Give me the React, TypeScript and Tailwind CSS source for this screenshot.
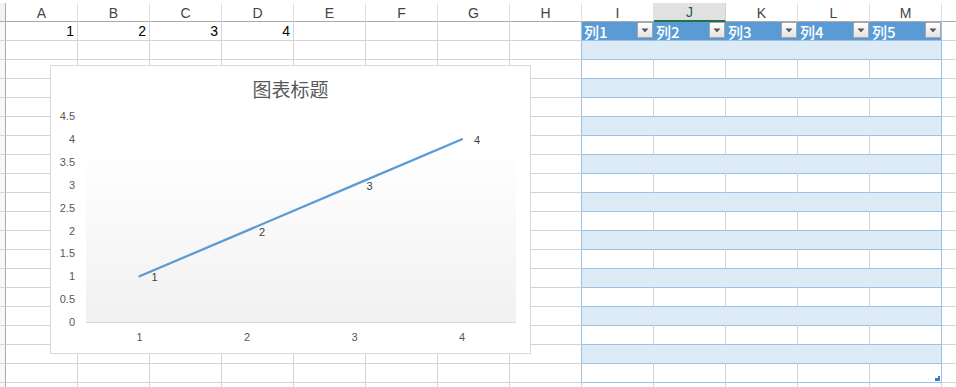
import React from "react";

const COLS = ["A", "B", "C", "D", "E", "F", "G", "H", "I", "J", "K", "L", "M"];
const ROWS = Array.from({ length: 20 }, (_, i) => i + 1);
const VALUES: Record<string, number> = { A: 1, B: 2, C: 3, D: 4 };
const TABLE_COLS = ["I", "J", "K", "L", "M"];

const font = "font-['Liberation_Sans','Noto_Sans_CJK_SC',sans-serif]";

function cellClass(col: string, row: number) {
  const inTable = TABLE_COLS.includes(col) && row <= 19;
  if (!inTable) {
    if (col === "H" && row <= 19) return "border-r border-b border-[#d4d4d4] border-r-[#9bc2e6]";
    return "border-r border-b border-[#d4d4d4]";
  }
  if (row === 1) {
    return col === "M"
      ? "border-r border-b bg-[#5b9bd5] border-[#5b9bd5] border-r-[#9bc2e6] border-b-[#9bc2e6]"
      : "border-r border-b bg-[#5b9bd5] border-[#5b9bd5] border-b-[#9bc2e6]";
  }
  if (row % 2 === 0) {
    return col === "M"
      ? "border-r border-b bg-[#ddebf7] border-[#ddebf7] border-r-[#9bc2e6] border-b-[#9bc2e6]"
      : "border-r border-b bg-[#ddebf7] border-[#ddebf7] border-b-[#9bc2e6]";
  }
  return col === "M"
    ? "border-r border-b border-[#9bc2e6]"
    : "border-r border-b border-[#d4d4d4] border-b-[#9bc2e6]";
}

function FilterButton() {
  return (
    <div className="flex h-[16px] w-[16px] items-center justify-center border border-[#a6a6a6] bg-gradient-to-b from-white to-[#e4e4e4]">
      <svg width="8" height="5" viewBox="0 0 8 5">
        <path d="M0.5 0.5 L7.5 0.5 L4 4.5 Z" fill="#595959" />
      </svg>
    </div>
  );
}

function ColumnHeader() {
  return (
    <div className="flex h-[22px] pt-[3px]">
      <div className="w-[6px] shrink-0 border-r border-b border-[#ababab] bg-[#f3f3f3]" />
      {COLS.map((c) =>
        c === "J" ? (
          <div
            key={c}
            className="flex w-[72px] shrink-0 items-center justify-center border-r border-b-2 border-[#d0d0d0] border-b-[#217346] bg-[#e1e1e1] pt-[2px] text-[14px] text-[#1e5f3b]"
          >
            {c}
          </div>
        ) : (
          <div
            key={c}
            className="flex w-[72px] shrink-0 items-center justify-center border-r border-b border-[#e1e1e1] border-b-[#ababab] pt-[3px] text-[14px] text-[#444]"
          >
            {c}
          </div>
        )
      )}
      <div className="flex-1 border-b border-[#ababab]" />
    </div>
  );
}

function Row({ row }: { row: number }) {
  return (
    <div className="flex h-[19px]">
      <div className="w-[6px] shrink-0 border-r border-b border-[#d4d4d4] border-r-[#ababab] bg-[#f8f8f8]" />
      {COLS.map((c) => {
        const idx = TABLE_COLS.indexOf(c);
        return (
          <div key={c} className={`relative flex w-[72px] shrink-0 items-center ${cellClass(c, row)}`}>
            {row === 1 && VALUES[c] !== undefined && (
              <span className="ml-auto pr-[3px] text-[14px] text-black">{VALUES[c]}</span>
            )}
            {row === 1 && idx >= 0 && (
              <div className="flex h-full w-full items-start justify-between">
                <span className="pl-[2px] font-['Noto_Sans_CJK_SC',sans-serif] text-[15px] font-medium leading-[19px] text-white">
                  列{idx + 1}
                </span>
                <FilterButton />
              </div>
            )}
            {row === 19 && c === "M" && (
              <div className="absolute right-[1px] bottom-[1px] h-[5px] w-[5px] bg-[#4472c4] [clip-path:polygon(100%_0,100%_100%,0_100%,0_40%,60%_40%,60%_0)]" />
            )}
          </div>
        );
      })}
      <div className="flex-1 border-b border-[#d4d4d4]" />
    </div>
  );
}

function Chart() {
  const yTicks = [0, 0.5, 1, 1.5, 2, 2.5, 3, 3.5, 4, 4.5];
  const xs = [88.5, 196, 303.5, 411];
  const y = (v: number) => 256 - 45.7 * v;
  const pts = [1, 2, 3, 4].map((v, i) => [xs[i], y(v)] as const);
  return (
    <div className="absolute left-[50px] top-[65px] h-[289px] w-[481px] border border-[#d9d9d9] bg-white">
      <svg className="absolute inset-0" width="479" height="287" viewBox="0 0 479 287">
        <defs>
          <linearGradient id="plotBg" x1="0" y1="0" x2="0" y2="1">
            <stop offset="0.15" stopColor="#ffffff" />
            <stop offset="1" stopColor="#f1f1f1" />
          </linearGradient>
        </defs>
        <rect x="35" y="50" width="430" height="206" fill="url(#plotBg)" />
        <line x1="35" y1="256.5" x2="465" y2="256.5" stroke="#d9d9d9" strokeWidth="1" />
        {yTicks.map((t) => (
          <text
            key={t}
            x="24"
            y={y(t) + 4}
            textAnchor="end"
            fontSize="11"
            fill="#595959"
            fontFamily="'Liberation Sans', sans-serif"
          >
            {t}
          </text>
        ))}
        {xs.map((x, i) => (
          <text
            key={i}
            x={x}
            y="275"
            textAnchor="middle"
            fontSize="11"
            fill="#595959"
            fontFamily="'Liberation Sans', sans-serif"
          >
            {i + 1}
          </text>
        ))}
        <polyline
          points={pts.map((p) => p.join(",")).join(" ")}
          fill="none"
          stroke="#5b9bd5"
          strokeWidth="2.25"
          strokeLinecap="round"
        />
        {pts.map((p, i) => (
          <text
            key={i}
            x={p[0] + 12}
            y={p[1] + 5}
            fontSize="11"
            fill="#404040"
            fontFamily="'Liberation Sans', sans-serif"
          >
            {i + 1}
          </text>
        ))}
      </svg>
      <div className="relative flex h-[44px] items-center justify-center pt-[2px] font-['Noto_Sans_CJK_SC',sans-serif] text-[19px] text-[#595959]">
        图表标题
      </div>
    </div>
  );
}

export default function App() {
  return (
    <div className={`relative h-[387px] w-[956px] overflow-hidden bg-white ${font}`}>
      <ColumnHeader />
      {ROWS.map((r) => (
        <Row key={r} row={r} />
      ))}
      <Chart />
    </div>
  );
}
